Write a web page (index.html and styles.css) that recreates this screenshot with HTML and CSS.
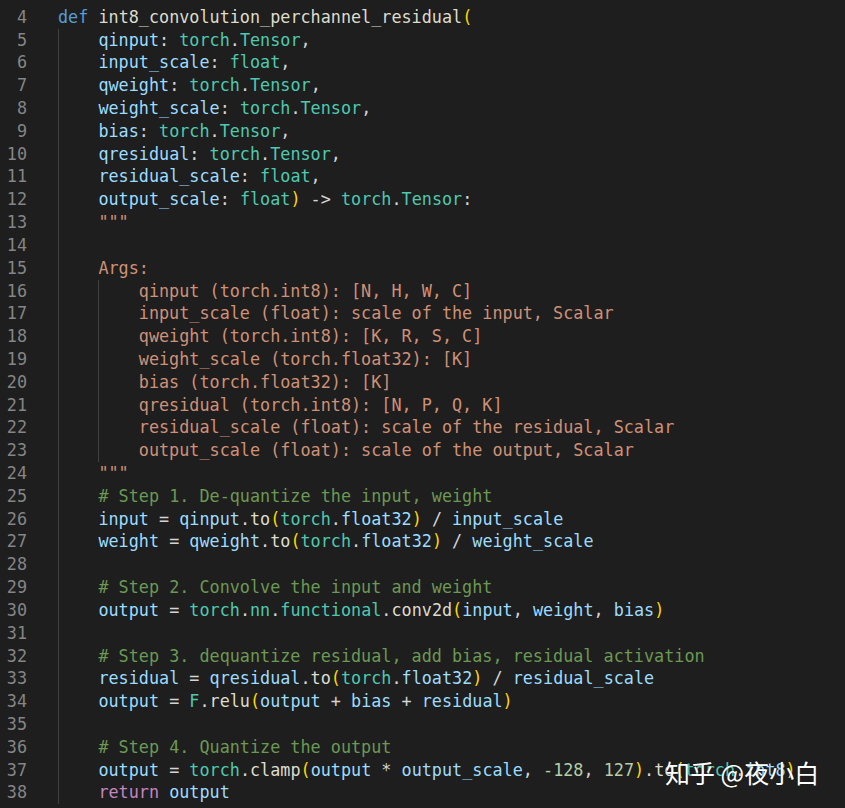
FILE: index.html
```html
<!DOCTYPE html>
<html>
<head>
<meta charset="utf-8">
<link rel="stylesheet" href="styles.css">
</head>
<body>
<div class="editor">
  <div class="code">
    <div class="ln first"><span class="no">3</span><span class="src"></span></div>
    <div class="ln"><span class="no">4</span><span class="src"><span class="kw">def</span> <span class="fn">int8_convolution_perchannel_residual</span><span class="br">(</span></span></div>
    <div class="ln"><span class="no">5</span><span class="src"><span class="ig"></span><span class="pa">qinput</span>: <span class="ty">torch</span>.<span class="ty">Tensor</span>,</span></div>
    <div class="ln"><span class="no">6</span><span class="src"><span class="ig"></span><span class="pa">input_scale</span>: <span class="ty">float</span>,</span></div>
    <div class="ln"><span class="no">7</span><span class="src"><span class="ig"></span><span class="pa">qweight</span>: <span class="ty">torch</span>.<span class="ty">Tensor</span>,</span></div>
    <div class="ln"><span class="no">8</span><span class="src"><span class="ig"></span><span class="pa">weight_scale</span>: <span class="ty">torch</span>.<span class="ty">Tensor</span>,</span></div>
    <div class="ln"><span class="no">9</span><span class="src"><span class="ig"></span><span class="pa">bias</span>: <span class="ty">torch</span>.<span class="ty">Tensor</span>,</span></div>
    <div class="ln"><span class="no">10</span><span class="src"><span class="ig"></span><span class="pa">qresidual</span>: <span class="ty">torch</span>.<span class="ty">Tensor</span>,</span></div>
    <div class="ln"><span class="no">11</span><span class="src"><span class="ig"></span><span class="pa">residual_scale</span>: <span class="ty">float</span>,</span></div>
    <div class="ln"><span class="no">12</span><span class="src"><span class="ig"></span><span class="pa">output_scale</span>: <span class="ty">float</span><span class="br">)</span> -&gt; <span class="ty">torch</span>.<span class="ty">Tensor</span>:</span></div>
    <div class="ln"><span class="no">13</span><span class="src"><span class="ig"></span><span class="st">"""</span></span></div>
    <div class="ln"><span class="no">14</span><span class="src"><span class="ig"></span></span></div>
    <div class="ln"><span class="no">15</span><span class="src"><span class="ig"></span><span class="st">Args:</span></span></div>
    <div class="ln"><span class="no">16</span><span class="src"><span class="ig"></span><span class="ig"></span><span class="st">qinput (torch.int8): [N, H, W, C]</span></span></div>
    <div class="ln"><span class="no">17</span><span class="src"><span class="ig"></span><span class="ig"></span><span class="st">input_scale (float): scale of the input, Scalar</span></span></div>
    <div class="ln"><span class="no">18</span><span class="src"><span class="ig"></span><span class="ig"></span><span class="st">qweight (torch.int8): [K, R, S, C]</span></span></div>
    <div class="ln"><span class="no">19</span><span class="src"><span class="ig"></span><span class="ig"></span><span class="st">weight_scale (torch.float32): [K]</span></span></div>
    <div class="ln"><span class="no">20</span><span class="src"><span class="ig"></span><span class="ig"></span><span class="st">bias (torch.float32): [K]</span></span></div>
    <div class="ln"><span class="no">21</span><span class="src"><span class="ig"></span><span class="ig"></span><span class="st">qresidual (torch.int8): [N, P, Q, K]</span></span></div>
    <div class="ln"><span class="no">22</span><span class="src"><span class="ig"></span><span class="ig"></span><span class="st">residual_scale (float): scale of the residual, Scalar</span></span></div>
    <div class="ln"><span class="no">23</span><span class="src"><span class="ig"></span><span class="ig"></span><span class="st">output_scale (float): scale of the output, Scalar</span></span></div>
    <div class="ln"><span class="no">24</span><span class="src"><span class="ig"></span><span class="st">"""</span></span></div>
    <div class="ln"><span class="no">25</span><span class="src"><span class="ig"></span><span class="cm"># Step 1. De-quantize the input, weight</span></span></div>
    <div class="ln"><span class="no">26</span><span class="src"><span class="ig"></span><span class="pa">input</span> = <span class="pa">qinput</span>.<span class="fn">to</span><span class="br">(</span><span class="ty">torch</span>.<span class="pa">float32</span><span class="br">)</span> / <span class="pa">input_scale</span></span></div>
    <div class="ln"><span class="no">27</span><span class="src"><span class="ig"></span><span class="pa">weight</span> = <span class="pa">qweight</span>.<span class="fn">to</span><span class="br">(</span><span class="ty">torch</span>.<span class="pa">float32</span><span class="br">)</span> / <span class="pa">weight_scale</span></span></div>
    <div class="ln"><span class="no">28</span><span class="src"><span class="ig"></span></span></div>
    <div class="ln"><span class="no">29</span><span class="src"><span class="ig"></span><span class="cm"># Step 2. Convolve the input and weight</span></span></div>
    <div class="ln"><span class="no">30</span><span class="src"><span class="ig"></span><span class="pa">output</span> = <span class="ty">torch</span>.<span class="ty">nn</span>.<span class="ty">functional</span>.<span class="fn">conv2d</span><span class="br">(</span><span class="pa">input</span>, <span class="pa">weight</span>, <span class="pa">bias</span><span class="br">)</span></span></div>
    <div class="ln"><span class="no">31</span><span class="src"><span class="ig"></span></span></div>
    <div class="ln"><span class="no">32</span><span class="src"><span class="ig"></span><span class="cm"># Step 3. dequantize residual, add bias, residual activation</span></span></div>
    <div class="ln"><span class="no">33</span><span class="src"><span class="ig"></span><span class="pa">residual</span> = <span class="pa">qresidual</span>.<span class="fn">to</span><span class="br">(</span><span class="ty">torch</span>.<span class="pa">float32</span><span class="br">)</span> / <span class="pa">residual_scale</span></span></div>
    <div class="ln"><span class="no">34</span><span class="src"><span class="ig"></span><span class="pa">output</span> = <span class="ty">F</span>.<span class="fn">relu</span><span class="br">(</span><span class="pa">output</span> + <span class="pa">bias</span> + <span class="pa">residual</span><span class="br">)</span></span></div>
    <div class="ln"><span class="no">35</span><span class="src"><span class="ig"></span></span></div>
    <div class="ln"><span class="no">36</span><span class="src"><span class="ig"></span><span class="cm"># Step 4. Quantize the output</span></span></div>
    <div class="ln"><span class="no">37</span><span class="src"><span class="ig"></span><span class="pa">output</span> = <span class="ty">torch</span>.<span class="fn">clamp</span><span class="br">(</span><span class="pa">output</span> * <span class="pa">output_scale</span>, <span class="nu">-128</span>, <span class="nu">127</span><span class="br">)</span>.<span class="fn">to</span><span class="br">(</span><span class="ty">torch</span>.<span class="pa">int8</span><span class="br">)</span></span></div>
    <div class="ln"><span class="no">38</span><span class="src"><span class="ig"></span><span class="rk">return</span> <span class="pa">output</span></span></div>
  </div>
  <div class="watermark">知乎 @夜小白</div>
</div>
</body>
</html>
```
FILE: styles.css
```css
html, body {
  margin: 0;
  padding: 0;
  background: #1e1e1e;
  overflow: hidden;
}
.editor {
  position: relative;
  width: 845px;
  height: 808px;
  overflow: hidden;
  background: #1e1e1e;
}
.code {
  padding-top: 5.8px;
  font-family: "DejaVu Sans Mono", monospace;
  font-size: 16.8px;
  color: #d4d4d4;
}
.ln {
  display: flex;
  height: 22.82px;
  line-height: 22.82px;
}
.ln.first {
  margin-top: -22.82px;
}
.no {
  width: 27px;
  text-align: right;
  color: #858585;
  flex: none;
}
.src {
  margin-left: 31px;
  white-space: pre;
}
.ig {
  display: inline-block;
  width: 4ch;
  height: 22.82px;
  vertical-align: top;
  border-left: 1px solid #404040;
  box-sizing: border-box;
}
.kw { color: #569cd6; }
.fn { color: #dcdccc; }
.pa { color: #9cdcfe; }
.ty { color: #4ec9b0; }
.br { color: #ffd700; }
.st { color: #ce9178; }
.cm { color: #6a9955; }
.nu { color: #b5cea8; }
.rk { color: #c586c0; }
.watermark {
  position: absolute;
  left: 665px;
  top: 755px;
  font-family: "Noto Sans CJK SC", sans-serif;
  font-size: 25px;
  line-height: 34px;
  color: #ffffff;
  text-shadow: 0 0 1px rgba(0,0,0,0.5);
  white-space: nowrap;
}
```
